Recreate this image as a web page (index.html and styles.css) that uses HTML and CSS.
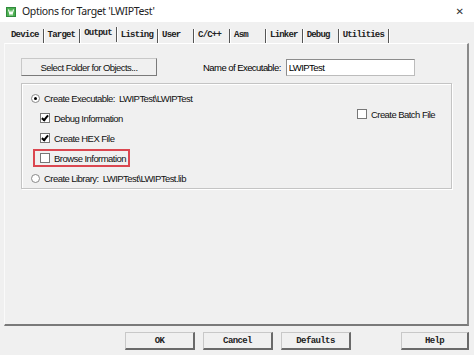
FILE: index.html
```html
<!DOCTYPE html>
<html lang="en">
<head>
  <meta charset="UTF-8" />
  <title>Options for Target 'LWIPTest'</title>
  <link rel="stylesheet" href="styles.css">
</head>
<body>
  <div class="window">
    <header class="titlebar">
      <svg class="app-icon" width="10" height="10" viewBox="0 0 10 10">
        <rect x="0" y="0" width="10" height="10" fill="#2f8a3c"/>
        <rect x="1" y="1" width="8" height="8" fill="#4caf50"/>
        <path d="M2.5 2.5 L4 7.5 L5 4.5 L6 7.5 L7.5 2.5" stroke="#fff" stroke-width="1.1" fill="none"/>
      </svg>
      <span class="title">Options for Target 'LWIPTest'</span>
      <span class="close">&#x2715;</span>
    </header>

    <nav class="tabs">
      <span class="tab">Device</span>
      <span class="tab">Target</span>
      <span class="tab active">Output</span>
      <span class="tab">Listing</span>
      <span class="tab">User</span>
      <span class="tab">C/C++</span>
      <span class="tab">Asm</span>
      <span class="tab">Linker</span>
      <span class="tab">Debug</span>
      <span class="tab">Utilities</span>
    </nav>

    <section class="page">
      <div class="top-row">
        <button class="win-btn folder-btn">Select Folder for Objects...</button>
        <label class="exe-label" for="exe">Name of Executable:</label>
        <input class="exe-input" id="exe" type="text" value="LWIPTest" />
      </div>

      <div class="group">
        <div class="row">
          <span class="radio checked"></span>
          <span class="label">Create Executable:&nbsp; LWIPTest\LWIPTest</span>
        </div>
        <div class="row split">
          <div class="item sub">
            <span class="check checked"></span>
            <span class="label">Debug Information</span>
          </div>
          <div class="item batch">
            <span class="check"></span>
            <span class="label">Create Batch File</span>
          </div>
        </div>
        <div class="row sub">
          <span class="check checked"></span>
          <span class="label">Create HEX File</span>
        </div>
        <div class="row">
          <div class="highlight">
            <span class="check"></span>
            <span class="label">Browse Information</span>
          </div>
        </div>
        <div class="row">
          <span class="radio"></span>
          <span class="label">Create Library:&nbsp; LWIPTest\LWIPTest.lib</span>
        </div>
      </div>
    </section>

    <footer class="footer">
      <button class="dlg-btn">OK</button>
      <button class="dlg-btn">Cancel</button>
      <button class="dlg-btn">Defaults</button>
      <button class="dlg-btn help">Help</button>
    </footer>
  </div>
</body>
</html>
```

FILE: styles.css
```css
body {
  margin: 0;
  padding: 0;
  background: #f0f0f0;
  font-family: 'Liberation Sans', Arial, sans-serif;
  color: #000;
  overflow: hidden;
}
.window {
  width: 474px;
  height: 355px;
  background: #f0f0f0;
}
.titlebar {
  height: 22px;
  background: #fff;
  display: flex;
  align-items: center;
  padding-left: 6px;
  padding-right: 10px;
  box-sizing: border-box;
}
.app-icon {
  margin-top: 1px;
}
.title {
  margin-left: 6px;
  font-family: 'Noto Sans', sans-serif;
  font-size: 10.5px;
  letter-spacing: -0.35px;
  color: #222;
  flex: 1;
}
.close {
  font-family: 'DejaVu Sans', sans-serif;
  font-size: 10px;
  color: #333;
}
.tabs {
  height: 21px;
  display: flex;
  align-items: flex-end;
  padding-left: 7px;
  box-sizing: border-box;
}
.tab {
  min-width: 36px;
  box-sizing: border-box;
  font-family: 'Liberation Mono', monospace;
  font-size: 9px;
  font-weight: bold;
  letter-spacing: -0.8px;
  color: #222;
  padding: 0 4px 0 4px;
  height: 14px;
  line-height: 13px;
  border-right: 1px solid #555;
  box-shadow: 1px 0 0 #fff;
}
.tab.active {
  margin-bottom: 1px;
  height: 15px;
  line-height: 12px;
}
.page {
  height: 283px;
  margin: 0 5px 0 4px;
  border-top: 1px solid #fff;
  border-left: 1px solid #fafafa;
  border-right: 2px solid #8a8a8a;
  border-bottom: 2px solid #7a7a7a;
  padding: 14px 0 0 16px;
  box-sizing: border-box;
}
.top-row {
  display: flex;
  align-items: center;
  height: 18px;
}
.win-btn {
  height: 18px;
  font-family: 'Liberation Sans', Arial, sans-serif;
  font-size: 9.5px;
  letter-spacing: -0.55px;
  background: #f0f0f0;
  border: 1px solid #c8c8c8;
  border-right-color: #7a7a7a;
  border-bottom-color: #7a7a7a;
  padding: 0;
  color: #111;
}
.folder-btn {
  width: 136px;
}
.exe-label {
  margin-left: 46px;
  font-size: 9.5px;
  letter-spacing: -0.55px;
}
.exe-input {
  margin-left: 5px;
  width: 129px;
  height: 17px;
  box-sizing: border-box;
  border: 1px solid #bcbcbc;
  border-top-color: #8c8c8c;
  border-left-color: #8c8c8c;
  font-family: 'Liberation Sans', Arial, sans-serif;
  font-size: 9.5px;
  letter-spacing: -0.55px;
  padding: 0 2px;
}
.group {
  margin-top: 7px;
  width: 431px;
  height: 106px;
  box-sizing: border-box;
  border: 1px solid #c4c4c4;
  box-shadow: inset 1px 1px 0 #fff, 1px 1px 0 #fff;
  padding: 4px 0 0 9px;
}
.row {
  height: 20px;
  display: flex;
  align-items: center;
}
.row.sub, .item.sub {
  padding-left: 9px;
}
.split {
  justify-content: space-between;
  padding-right: 16px;
}
.item {
  display: flex;
  align-items: center;
}
.batch {
  margin-bottom: 8px;
}
.label {
  font-size: 9.5px;
  letter-spacing: -0.55px;
  margin-left: 4px;
  color: #111;
  white-space: nowrap;
}
.check {
  width: 8px;
  height: 8px;
  border: 1px solid #777;
  background: #fff;
  position: relative;
}
.check.checked::after {
  content: "";
  position: absolute;
  left: 2px;
  top: 0px;
  width: 2px;
  height: 5px;
  border-right: 2px solid #000;
  border-bottom: 2px solid #000;
  transform: rotate(40deg);
}
.radio {
  width: 7px;
  height: 7px;
  border-radius: 50%;
  border: 1px solid #888;
  background: #fff;
  position: relative;
}
.radio.checked::after {
  content: "";
  position: absolute;
  left: 2px;
  top: 2px;
  width: 3px;
  height: 3px;
  border-radius: 50%;
  background: #000;
}
.highlight {
  display: flex;
  align-items: center;
  margin-left: 2px;
  height: 18px;
  width: 97px;
  box-sizing: border-box;
  border: 2px solid #db4750;
  padding-left: 5px;
}
.footer {
  display: flex;
  margin-top: 6px;
  padding-left: 125px;
  gap: 8px;
}
.dlg-btn {
  width: 70px;
  height: 18px;
  font-family: 'Liberation Mono', monospace;
  font-size: 9px;
  font-weight: bold;
  letter-spacing: -0.6px;
  color: #222;
  background: #f0f0f0;
  border: 1px solid #c8c8c8;
  border-right: 2px solid #6a6a6a;
  border-bottom: 2px solid #6a6a6a;
  padding: 0;
}
.dlg-btn.help {
  margin-left: 42px;
  width: 68px;
}
```
